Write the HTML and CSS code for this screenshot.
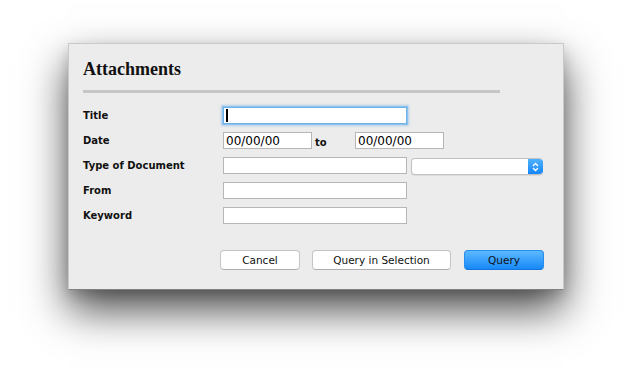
FILE: index.html
```
<!DOCTYPE html>
<html lang="en">
<head>
    <meta charset="UTF-8">
    <title>Attachments</title>
    <link rel="stylesheet" href="styles.css">
</head>
<body>
    <div class="dialog">
        <h1>Attachments</h1>
        <div class="separator"></div>
        <form class="search-form">
            <label for="title">Title</label>
            <div class="fields">
                <div class="focus-ring"><input type="text" id="title" class="field wide"><span class="caret"></span></div>
            </div>

            <label for="dateFrom">Date</label>
            <div class="fields">
                <input type="text" id="dateFrom" class="field date" value="00/00/00">
                <span class="to">to</span>
                <input type="text" id="dateTo" class="field date" value="00/00/00">
            </div>

            <label for="docType">Type of Document</label>
            <div class="fields">
                <input type="text" id="docType" class="field wide">
                <div class="popup">
                    <span class="popup-value"></span>
                    <span class="popup-arrows">
                        <svg width="7" height="10" viewBox="0 0 7 10">
                            <path d="M1 4 L3.5 1.5 L6 4 M1 6 L3.5 8.5 L6 6" fill="none" stroke="#fff" stroke-width="1.3"/>
                        </svg>
                    </span>
                </div>
            </div>

            <label for="from">From</label>
            <div class="fields">
                <input type="text" id="from" class="field wide">
            </div>

            <label for="keyword">Keyword</label>
            <div class="fields">
                <input type="text" id="keyword" class="field wide">
            </div>
        </form>
        <div class="buttons">
            <button type="button" class="btn">Cancel</button>
            <button type="button" class="btn btn-selection">Query in Selection</button>
            <button type="button" class="btn btn-primary">Query</button>
        </div>
    </div>
</body>
</html>
```

FILE: styles.css
```
html {
    height: 100%;
    background: #fff;
}
body {
    margin: 0;
    height: 100%;
    box-sizing: border-box;
    padding: 43px 0 0 68px;
    background: #fff;
    font-family: "DejaVu Sans", Verdana, sans-serif;
}
.dialog {
    width: 496px;
    height: 247px;
    box-sizing: border-box;
    padding: 15px 0 0 14px;
    background: #ececec;
    border: 1px solid #c9c9c9;
    border-bottom-color: #808080;
    box-shadow: 0 20px 40px rgba(0, 0, 0, 0.7), 0 6px 12px rgba(0, 0, 0, 0.15);
    display: flex;
    flex-direction: column;
}
h1 {
    margin: 0;
    font-family: "Liberation Serif", "Times New Roman", serif;
    font-size: 18px;
    line-height: 20px;
    font-weight: bold;
    color: #111;
}
.separator {
    width: 417px;
    height: 3px;
    margin-top: 11px;
    background: #c6c6c6;
}
.search-form {
    margin-top: 14px;
    display: grid;
    grid-template-columns: 140px auto;
    grid-auto-rows: 17px;
    row-gap: 8px;
    align-items: center;
}
.search-form label {
    font-size: 10px;
    font-weight: bold;
    color: #111;
}
.fields {
    display: flex;
    align-items: center;
    height: 17px;
}
.field {
    box-sizing: border-box;
    height: 17px;
    margin: 0;
    padding: 0 2px;
    border: 1px solid #b6b6b6;
    background: #fff;
    font-family: "DejaVu Sans", Verdana, sans-serif;
    font-size: 12px;
    color: #000;
    outline: none;
}
.wide {
    width: 184px;
}
.date {
    width: 89px;
}
.focus-ring {
    position: relative;
    display: flex;
}
.focus-ring .field {
    border-color: #6fb2e8;
    box-shadow: 0 0 0 1px #8cc2ee, 0 0 2px 2px rgba(110, 170, 230, 0.45);
}
.caret {
    position: absolute;
    left: 3px;
    top: 2px;
    width: 1.5px;
    height: 13px;
    background: #000;
}
.to {
    width: 40px;
    margin-left: 3px;
    padding-top: 4px;
    font-size: 10px;
    font-weight: bold;
    color: #111;
}
.popup {
    display: flex;
    width: 132px;
    height: 17px;
    margin: 2px 0 0 4px;
    box-sizing: border-box;
    background: #fff;
    border: 1px solid #c2c2c2;
    border-right: none;
    border-radius: 4px;
    overflow: hidden;
    box-shadow: 0 1px 1px rgba(0, 0, 0, 0.08);
}
.popup-value {
    flex: 1;
}
.popup-arrows {
    width: 15px;
    display: flex;
    align-items: center;
    justify-content: center;
    background: linear-gradient(#4fb2ff, #1685f8);
}
.buttons {
    display: flex;
    justify-content: flex-end;
    gap: 12px;
    margin-top: 26px;
    padding-right: 19px;
}
.btn {
    height: 20px;
    width: 80px;
    padding: 0;
    border: 1px solid #c4c4c4;
    border-bottom-color: #afafaf;
    border-radius: 4px;
    background: #fff;
    font-family: "DejaVu Sans", Verdana, sans-serif;
    font-size: 10.5px;
    color: #111;
}
.btn-selection {
    width: 139px;
}
.btn-primary {
    margin-left: 1px;
    border-color: #2a8ef0;
    border-bottom-color: #1474dc;
    background: linear-gradient(#5cb9ff, #1689f8);
}
```
